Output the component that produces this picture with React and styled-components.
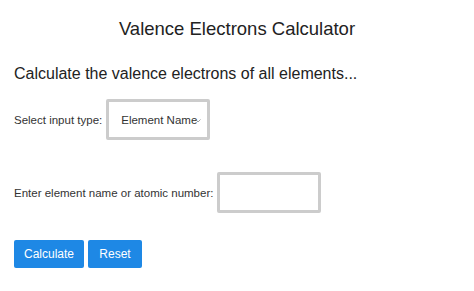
import React from "react";
import styled, { createGlobalStyle } from "styled-components";

const GlobalStyle = createGlobalStyle`
  html, body {
    margin: 0;
    padding: 0;
    background: #ffffff;
  }
  body {
    font-family: "Liberation Sans", Arial, sans-serif;
    color: #333333;
  }
`;

const Page = styled.div`
  width: 474px;
  height: 291px;
  box-sizing: border-box;
  padding: 18px 14px 0 14px;
  display: flex;
  flex-direction: column;
`;

const Title = styled.h1`
  margin: 0;
  text-align: center;
  font-size: 18.5px;
  font-weight: 400;
  line-height: 22px;
  color: #222;
`;

const Subtitle = styled.h2`
  margin: 24px 0 0 0;
  font-size: 16px;
  font-weight: 400;
  line-height: 20px;
  color: #222;
`;

const Row = styled.div`
  display: flex;
  align-items: center;
  gap: ${(p) => p.gap || 4}px;
  margin-top: ${(p) => p.top}px;
`;

const Label = styled.label`
  font-size: 11.5px;
  color: #333;
`;

const Field = styled.div`
  box-sizing: border-box;
  width: 104px;
  height: 41px;
  border: 3px solid #cccccc;
  border-radius: 2px;
  background: #fff;
  display: flex;
  align-items: center;
  overflow: hidden;
  padding-left: ${(p) => (p.select ? 12 : 0)}px;
`;

const SelectText = styled.span`
  font-size: 11.5px;
  color: #333;
  white-space: nowrap;
`;

const Chevron = styled.svg`
  flex: none;
  margin-left: -2px;
  margin-top: 2px;
`;

const Buttons = styled.div`
  display: flex;
  gap: 4px;
  margin-top: 27px;
`;

const Button = styled.button`
  box-sizing: border-box;
  height: 28px;
  width: ${(p) => p.w}px;
  border: none;
  border-radius: 2px;
  background: #1e88e5;
  color: #fff;
  font-family: "Liberation Sans", Arial, sans-serif;
  font-size: 12px;
  padding: 0;
  cursor: pointer;
`;

export default function App() {
  return (
    <>
      <GlobalStyle />
      <Page>
        <Title>Valence Electrons Calculator</Title>
        <Subtitle>Calculate the valence electrons of all elements...</Subtitle>
        <Row top={15} gap={4}>
          <Label>Select input type:</Label>
          <Field select>
            <SelectText>Element Name</SelectText>
            <Chevron width="6" height="4" viewBox="0 0 6 4">
              <path d="M0.5 0.5 L3 3 L5.5 0.5" fill="none" stroke="#888" strokeWidth="0.8" />
            </Chevron>
          </Field>
        </Row>
        <Row top={32} gap={4}>
          <Label>Enter element name or atomic number:</Label>
          <Field />
        </Row>
        <Buttons>
          <Button w={70}>Calculate</Button>
          <Button w={54}>Reset</Button>
        </Buttons>
      </Page>
    </>
  );
}
